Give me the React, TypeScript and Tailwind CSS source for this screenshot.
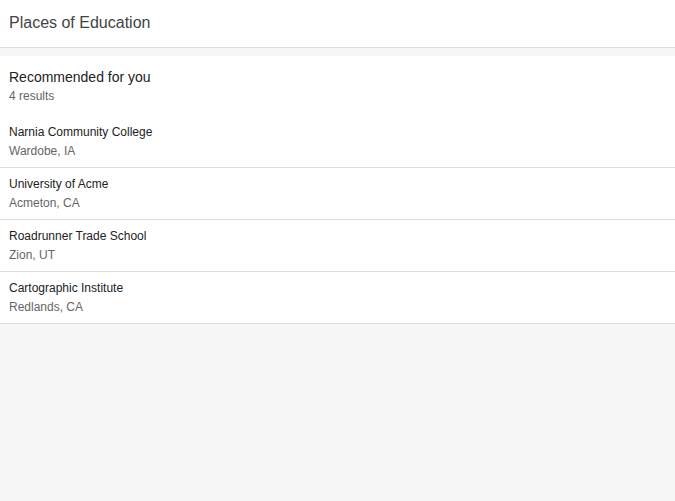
const places = [
  { name: 'Narnia Community College', location: 'Wardobe, IA' },
  { name: 'University of Acme', location: 'Acmeton, CA' },
  { name: 'Roadrunner Trade School', location: 'Zion, UT' },
  { name: 'Cartographic Institute', location: 'Redlands, CA' },
]

export default function App() {
  return (
    <div className="min-h-[501px] bg-[#f7f7f7] font-['Liberation_Sans',Arial,sans-serif]">
      <header className="h-[48px] border-b border-[#dedede] bg-white px-[9px] pt-[11px]">
        <h1 className="text-[16px] leading-[24px] text-[#444]">Places of Education</h1>
      </header>
      <section className="mt-[8px] border-b border-[#dedede] bg-white">
        <div className="px-[9px] pt-[11px] pb-[12px]">
          <h2 className="text-[14px] leading-[20px] text-[#222]">Recommended for you</h2>
          <p className="mt-[1px] text-[12px] leading-[16px] text-[#666]">{places.length} results</p>
        </div>
        <ul>
          {places.map((place, index) => (
            <li
              key={place.name}
              className={`px-[9px] pt-[8px] pb-[8px] ${index < places.length - 1 ? 'border-b border-[#dedede]' : ''}`}
            >
              <div className="text-[12px] leading-[16px] text-[#222]">{place.name}</div>
              <div className="mt-[3px] text-[12px] leading-[16px] text-[#666]">{place.location}</div>
            </li>
          ))}
        </ul>
      </section>
    </div>
  )
}
